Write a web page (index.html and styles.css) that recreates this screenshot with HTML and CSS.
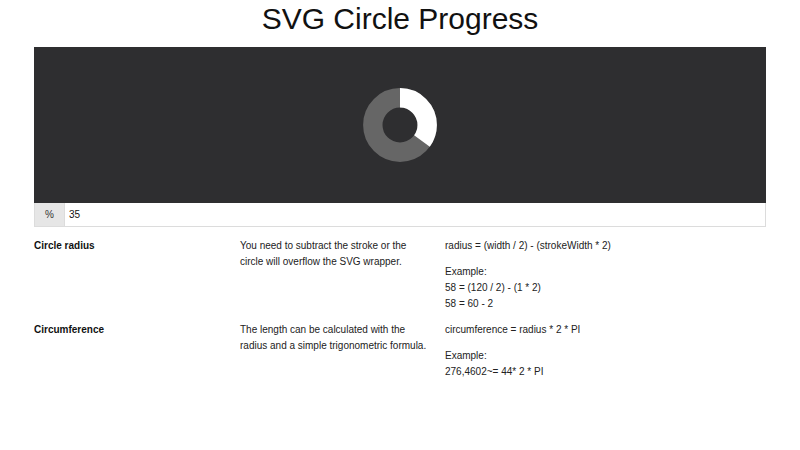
FILE: index.html
```html
<!DOCTYPE html>
<html lang="en">
<head>
<meta charset="utf-8">
<title>SVG Circle Progress</title>
<link rel="stylesheet" href="styles.css">
</head>
<body>
<div class="page">
  <h1 class="title">SVG Circle Progress</h1>
  <div class="stage">
    <svg class="ring" width="80" height="80" viewBox="0 0 80 80">
      <circle class="ring-track" cx="40" cy="40" r="27.2"></circle>
      <circle class="ring-bar" cx="40" cy="40" r="27.2" transform="rotate(-90 40 40)" style="stroke-dasharray: 59.82 170.9"></circle>
    </svg>
  </div>
  <div class="input-group">
    <span class="addon">%</span>
    <span class="field">35</span>
  </div>
  <div class="notes">
    <div class="term">Circle radius</div>
    <div class="desc"><p>You need to subtract the stroke or the circle will overflow the SVG wrapper.</p></div>
    <div class="formula">
      <p>radius = (width / 2) - (strokeWidth * 2)</p>
      <p>Example:<br>58 = (120 / 2) - (1 * 2)<br>58 = 60 - 2</p>
    </div>
    <div class="term">Circumference</div>
    <div class="desc"><p>The length can be calculated with the radius and a simple trigonometric formula.</p></div>
    <div class="formula">
      <p>circumference = radius * 2 * PI</p>
      <p>Example:<br>276,4602~= 44* 2 * PI</p>
    </div>
  </div>
</div>
</body>
</html>
```
FILE: styles.css
```css
html, body {
  margin: 0;
  padding: 0;
  background: #fff;
}
body {
  font-family: "Liberation Sans", Arial, sans-serif;
  color: #222;
  font-size: 10px;
  line-height: 16px;
}
.page {
  padding: 0 34px;
}
.title {
  margin: 1px 0 10px;
  font-size: 30px;
  line-height: 36px;
  font-weight: normal;
  text-align: center;
  color: #111;
}
.stage {
  height: 156px;
  background: #2e2e30;
  display: flex;
  align-items: center;
  justify-content: center;
}
.ring {
  display: block;
}
.ring-track {
  fill: none;
  stroke: #666666;
  stroke-width: 19.4;
}
.ring-bar {
  fill: none;
  stroke: #ffffff;
  stroke-width: 19.4;
}
.input-group {
  display: flex;
  height: 24px;
  box-sizing: border-box;
  border: 1px solid #dcdcdc;
  border-top: none;
}
.addon {
  width: 29px;
  background: #e6e6e6;
  display: flex;
  align-items: center;
  justify-content: center;
  border-right: 1px solid #dcdcdc;
  color: #333;
}
.field {
  flex: 1;
  display: flex;
  align-items: center;
  padding-left: 4px;
  color: #111;
}
.notes {
  display: grid;
  grid-template-columns: 206px 205px 1fr;
  margin-top: 11px;
}
.notes p {
  margin: 0 0 10px;
}
.term {
  font-weight: bold;
  color: #111;
}
.desc {
  padding-right: 15px;
}
.formula {
  color: #222;
}
```
